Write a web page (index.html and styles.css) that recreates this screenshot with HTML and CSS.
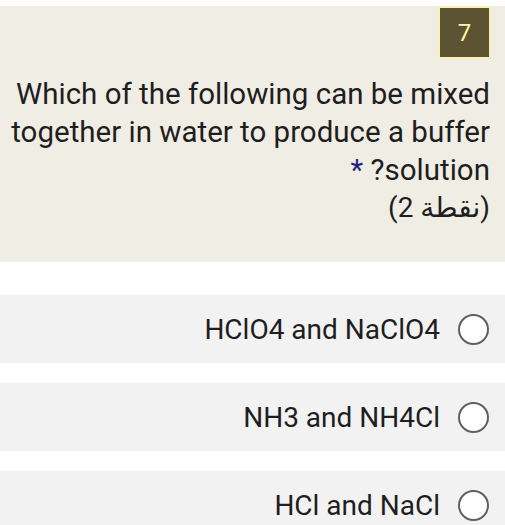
FILE: index.html
```html
<!DOCTYPE html>
<html lang="en">
<head>
<meta charset="utf-8">
<link rel="stylesheet" href="styles.css">
</head>
<body>
<section class="header">
  <div class="badge-row"><div class="badge">7</div></div>
  <div class="question" dir="rtl">Which of the following can be mixed together in water to produce a buffer solution? <span class="req">*</span></div>
  <div class="points" dir="ltr">(2 نقطة)</div>
</section>
<div class="options">
  <label class="option"><span class="opt-text">HClO4 and NaClO4</span><span class="radio"></span></label>
  <label class="option"><span class="opt-text">NH3 and NH4Cl</span><span class="radio"></span></label>
  <label class="option"><span class="opt-text">HCl and NaCl</span><span class="radio"></span></label>
</div>
</body>
</html>
```
FILE: styles.css
```css
html, body {
  margin: 0;
  padding: 0;
  background: #ffffff;
}
body {
  font-family: Roboto, "Noto Sans", "DejaVu Sans", sans-serif;
  color: #1e1e1e;
  width: 505px;
  height: 525px;
  overflow: hidden;
}
.header {
  margin-top: 6px;
  background: #f0ede4;
  height: 255px;
  box-sizing: border-box;
  box-shadow: 0 1px 1px rgba(0,0,0,0.06);
}
.badge-row {
  display: flex;
  justify-content: flex-end;
  padding-right: 14px;
}
.badge {
  width: 53px;
  height: 53px;
  box-sizing: border-box;
  background: #5b5331;
  border: 2px solid #f9f0b4;
  color: #fff6a6;
  font-size: 24px;
  display: flex;
  align-items: center;
  justify-content: center;
}
.question {
  margin-top: 16px;
  padding: 0 15px 0 7px;
  font-size: 29.5px;
  line-height: 38px;
  text-align: right;
}
.req {
  color: #1b2585;
}
.points {
  padding-right: 15px;
  font-size: 28px;
  line-height: 38px;
  text-align: right;
}
.options {
  margin-top: 34px;
  display: flex;
  flex-direction: column;
  gap: 20px;
}
.option {
  height: 68px;
  background: #f2f2f2;
  display: flex;
  align-items: center;
  justify-content: flex-end;
  padding-right: 16px;
  gap: 18px;
  font-size: 28px;
}
.radio {
  width: 31px;
  height: 31px;
  box-sizing: border-box;
  border: 2px solid #606060;
  border-radius: 50%;
  background: #ffffff;
  flex: none;
}
```
